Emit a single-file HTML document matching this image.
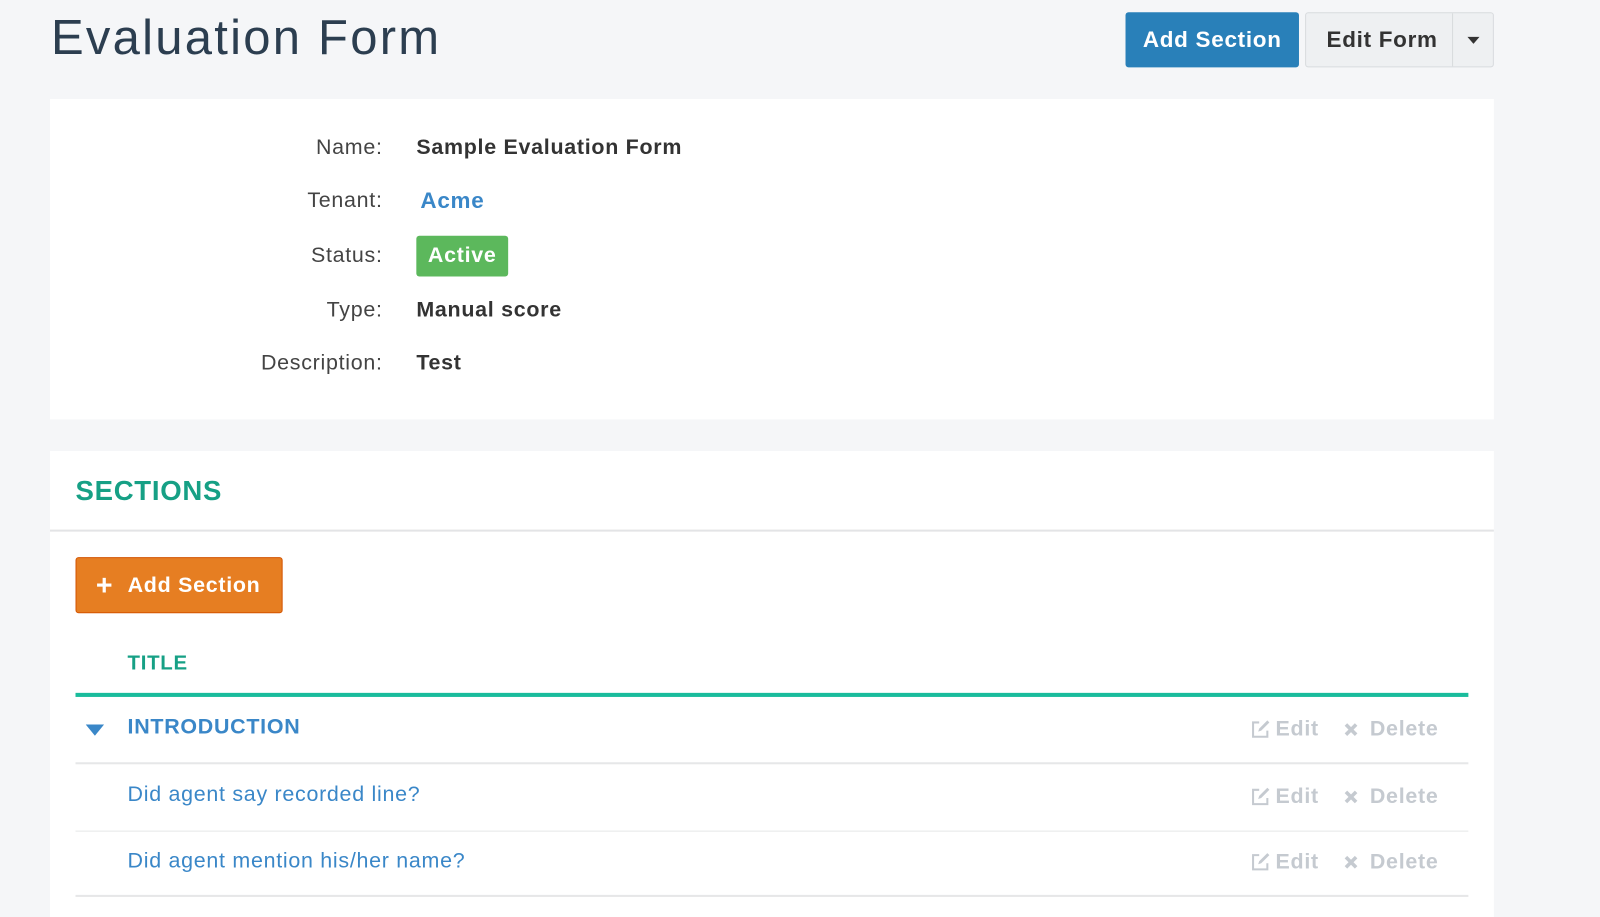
<!DOCTYPE html>
<html><head><meta charset="utf-8"><style>
*{box-sizing:border-box;margin:0;padding:0}
body{width:1600px;height:899px;overflow:hidden;background:#f5f6f8;font-family:"Liberation Sans",sans-serif;color:#333;letter-spacing:0.7px}
#w{position:absolute;left:0;top:0;width:1568px;height:881px;transform:scale(1.02041);transform-origin:0 0}
.abs{position:absolute}
h1{position:absolute;left:50px;top:10px;font-size:48px;font-weight:400;color:#2c3e50;letter-spacing:2.2px}
.btn{position:absolute;top:12px;height:54px;font-size:22px;font-weight:bold;display:flex;align-items:center;justify-content:center;border-radius:3px}
.card{position:absolute;left:49px;width:1415px;background:#fff}
.lbl{position:absolute;right:1193px;font-size:21px;color:#444;text-align:right;white-space:nowrap}
.val{position:absolute;left:408px;font-size:21px;font-weight:bold;color:#333}
.row{position:absolute;left:74px;width:1365px;border-bottom:2px solid #e6e7e8}
.q{position:absolute;left:125px;font-size:21px;color:#3a87c8}
.act{position:absolute;font-size:21px;font-weight:bold;color:#c5cad0;white-space:nowrap;display:flex;align-items:center}
</style></head><body><div id="w">
<h1>Evaluation Form</h1>
<div class="btn" style="left:1103px;width:170px;background:#2980b9;color:#fff">Add Section</div>
<div class="btn" style="left:1279px;width:185px;background:#eef0f2;border:1px solid #d8dbde;color:#333;justify-content:flex-start;padding-left:20px">Edit Form<span style="position:absolute;left:143px;top:0;bottom:0;border-left:1px solid #d8dbde;width:41px;display:flex;align-items:center;justify-content:center"><svg width="12" height="7"><path d="M0 0h12L6 7z" fill="#333"/></svg></span></div>

<div class="card" style="top:97px;height:314px"></div>
<div class="lbl" style="top:133px">Name:</div><div class="val" style="top:133px">Sample Evaluation Form</div>
<div class="lbl" style="top:185px">Tenant:</div><div class="val" style="top:184px;left:412px;color:#3a87c8;font-size:22px">Acme</div>
<div class="lbl" style="top:239px">Status:</div><div class="abs" style="left:408px;top:231px;width:90px;height:40px;background:#5cb85c;border-radius:3px;color:#fff;font-size:21px;font-weight:bold;display:flex;align-items:center;justify-content:center">Active</div>
<div class="lbl" style="top:292px">Type:</div><div class="val" style="top:292px">Manual score</div>
<div class="lbl" style="top:344px">Description:</div><div class="val" style="top:344px">Test</div>

<div class="card" style="top:442px;height:457px"></div>
<div class="abs" style="left:74px;top:466px;font-size:27px;font-weight:bold;color:#16a085">SECTIONS</div>
<div class="abs" style="left:49px;top:519px;width:1415px;border-top:2px solid #e3e4e6"></div>
<div class="abs" style="left:74px;top:546px;width:203px;height:55px;background:#e67e22;border:1px solid #d35400;border-radius:3px;color:#fff;font-size:21px;font-weight:bold;display:flex;align-items:center;padding-left:19px"><span style="font-size:28px;margin-right:14px">+</span>Add Section</div>
<div class="abs" style="left:125px;top:639px;font-size:20px;font-weight:bold;color:#16a085">TITLE</div>
<div class="abs" style="left:74px;top:679px;width:1365px;height:4px;background:#1abc9c"></div>
<div class="row" style="top:683px;height:66px"></div>
<svg class="abs" style="left:84px;top:710px" width="18" height="11"><path d="M0 0h18L9 11z" fill="#3a87c8"/></svg>
<div class="abs" style="left:125px;top:701px;font-size:21px;font-weight:bold;color:#3a87c8">INTRODUCTION</div>
<div class="row" style="top:749px;height:66px;border-bottom-width:1px"></div>
<div class="q" style="top:767px">Did agent say recorded line?</div>
<div class="row" style="top:815px;height:64px;border-bottom-width:2px"></div>
<div class="q" style="top:832px">Did agent mention his/her name?</div>

<div class="act" style="left:1225px;top:703px"><svg width="20" height="20" viewBox="0 0 20 20" style="margin-right:5px"><path d="M9 3H3v14h14v-6" fill="none" stroke="#c5cad0" stroke-width="2"/><path d="M8 12l1-3 8-8 2 2-8 8z" fill="#c5cad0"/></svg>Edit<svg width="16" height="16" viewBox="0 0 16 16" style="margin:0 10px 0 24px"><path d="M3 3l10 10M13 3L3 13" stroke="#c5cad0" stroke-width="3.5"/></svg>Delete</div>
<div class="act" style="left:1225px;top:769px"><svg width="20" height="20" viewBox="0 0 20 20" style="margin-right:5px"><path d="M9 3H3v14h14v-6" fill="none" stroke="#c5cad0" stroke-width="2"/><path d="M8 12l1-3 8-8 2 2-8 8z" fill="#c5cad0"/></svg>Edit<svg width="16" height="16" viewBox="0 0 16 16" style="margin:0 10px 0 24px"><path d="M3 3l10 10M13 3L3 13" stroke="#c5cad0" stroke-width="3.5"/></svg>Delete</div>
<div class="act" style="left:1225px;top:833px"><svg width="20" height="20" viewBox="0 0 20 20" style="margin-right:5px"><path d="M9 3H3v14h14v-6" fill="none" stroke="#c5cad0" stroke-width="2"/><path d="M8 12l1-3 8-8 2 2-8 8z" fill="#c5cad0"/></svg>Edit<svg width="16" height="16" viewBox="0 0 16 16" style="margin:0 10px 0 24px"><path d="M3 3l10 10M13 3L3 13" stroke="#c5cad0" stroke-width="3.5"/></svg>Delete</div>
</div></body></html>
